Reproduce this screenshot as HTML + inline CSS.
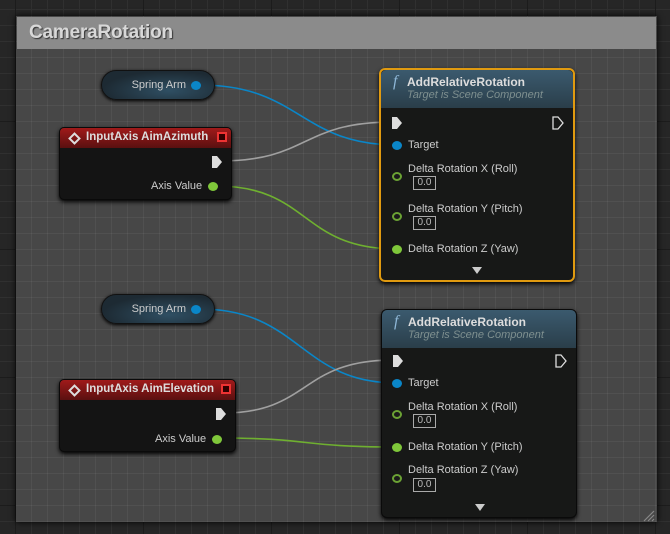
<!DOCTYPE html>
<html><head><style>
*{margin:0;padding:0;box-sizing:border-box}
body{width:670px;height:534px;overflow:hidden;background:#262626;font-family:"Liberation Sans",sans-serif;position:relative;
background-image:linear-gradient(#1c1c1c 1px,transparent 1px),linear-gradient(90deg,#1c1c1c 1px,transparent 1px),linear-gradient(#303030 1px,transparent 1px),linear-gradient(90deg,#303030 1px,transparent 1px);
background-size:128px 128px,128px 128px,16px 16px,16px 16px;background-position:-113px -7px,-113px -7px,-1px -7px,-1px -7px}
.abs{position:absolute}
.comment{left:16px;top:16px;width:641px;height:506px;background:#474747;box-shadow:0 0 6px #000;
background-image:linear-gradient(rgba(255,255,255,.05) 1px,transparent 1px),linear-gradient(90deg,rgba(255,255,255,.05) 1px,transparent 1px);background-size:16px 16px;background-position:-1px 9px}
.title{left:17px;top:17px;width:639px;height:32px;background:#8b8b8b;color:#d8d8d8;font-weight:bold;font-size:19px;padding:5px 12px;text-shadow:1px 1px 1px #333;letter-spacing:-0.2px}
.pill{height:30px;width:114px;border-radius:15px;background:radial-gradient(ellipse at 60% 70%,#2f4f63,#1d2a33 70%);border:1px solid #111;box-shadow:0 1px 3px #000;color:#ccc;font-size:11px;text-align:right;padding:8px 28px 0 0}
.dot{position:absolute;width:10px;height:9px;border-radius:50%}
.blue{background:#0a86c8}
.green{background:#7fc73a}
.ring{border:2px solid #6ba234;background:#1a1a1a}
.ev{background:#141414;border-radius:5px;border:1px solid #0a0a0a;box-shadow:0 2px 4px #000}
.evh{height:20px;background:linear-gradient(#a01a1a,#5a1010);border-radius:4px 4px 0 0;color:#ddd;font-weight:bold;font-size:11.5px;padding:3px 0 0 26px}
.fn{background:#171817;border-radius:6px;box-shadow:0 2px 4px #000}
.fnh{height:38px;background:linear-gradient(#3b5a6e,#2a3e4a);border-radius:5px 5px 0 0;color:#ddd;font-weight:bold;font-size:12px;padding:5px 0 0 26px}
.fnh i{display:block;font-weight:normal;font-size:11px;color:#7e8f8f}
.f{position:absolute;left:12px;top:3px;font-family:"Liberation Serif",serif;font-style:italic;color:#8fb8d8;font-size:16px;font-weight:normal}
.lbl{position:absolute;color:#ccc;font-size:11px;white-space:nowrap}
.box{position:absolute;width:23px;height:14px;border:1px solid #aaa;color:#bbb;font-size:10px;text-align:center;line-height:12px}
</style></head><body>
<div class="abs comment"></div>
<div class="abs title">CameraRotation</div>
<svg class="abs" style="left:640px;top:508px" width="16" height="14"><path d="M4 13L14 3M8 13L14 7M12 13L14 11" stroke="#888" stroke-width="1.2"/></svg>

<svg class="abs" style="left:0;top:0" width="670" height="534" fill="none" stroke-width="1.6">
<path d="M200 85 C300 85,300 145,397 145" stroke="#0a86c8"/>
<path d="M219 161 C310 161,300 122,393 122" stroke="#a0a0a0"/>
<path d="M216 186 C310 186,300 249,397 249" stroke="#6fb030"/>
<path d="M200 309 C300 309,300 383,397 383" stroke="#0a86c8"/>
<path d="M223 413 C310 413,300 360,393 360" stroke="#a0a0a0"/>
<path d="M220 438 C310 438,300 447,397 447" stroke="#6fb030"/>
</svg>

<div class="abs pill" style="left:101px;top:70px">Spring Arm</div>
<div class="dot blue" style="left:191px;top:81px"></div>
<div class="abs pill" style="left:101px;top:294px">Spring Arm</div>
<div class="dot blue" style="left:191px;top:305px"></div>

<div class="abs ev" style="left:59px;top:127px;width:173px;height:73px">
<div class="evh">InputAxis AimAzimuth</div>
<div class="abs" style="left:10px;top:6px;width:9px;height:9px;border:2px solid #ddd;transform:rotate(45deg)"></div>
<div class="abs" style="left:157px;top:4px;width:10px;height:10px;border:2px solid #e33;background:#300"></div>
<svg class="abs" style="left:151px;top:27px" width="12" height="14"><path d="M1 1H6L11 7L6 13H1Z" fill="#ddd"/></svg>
<div class="lbl" style="left:91px;top:52px">Axis Value</div>
<div class="dot green" style="left:148px;top:54px"></div>
</div>

<div class="abs ev" style="left:59px;top:379px;width:177px;height:73px">
<div class="evh">InputAxis AimElevation</div>
<div class="abs" style="left:10px;top:6px;width:9px;height:9px;border:2px solid #ddd;transform:rotate(45deg)"></div>
<div class="abs" style="left:161px;top:4px;width:10px;height:10px;border:2px solid #e33;background:#300"></div>
<svg class="abs" style="left:155px;top:27px" width="12" height="14"><path d="M1 1H6L11 7L6 13H1Z" fill="#ddd"/></svg>
<div class="lbl" style="left:95px;top:53px">Axis Value</div>
<div class="dot green" style="left:152px;top:55px"></div>
</div>

<div class="abs fn" style="left:379px;top:68px;width:196px;height:214px;border:2px solid #e09a10">
<div class="fnh"><span class="f">f</span>AddRelativeRotation<i>Target is Scene Component</i></div>
<svg class="abs" style="left:10px;top:46px" width="12" height="14"><path d="M1 1H6L11 7L6 13H1Z" fill="#ddd"/></svg>
<svg class="abs" style="left:171px;top:46px" width="12" height="14"><path d="M1 1H6L11 7L6 13H1Z" fill="none" stroke="#ddd" stroke-width="1.3"/></svg>
<div class="dot blue" style="left:11px;top:71px"></div><div class="lbl" style="left:27px;top:69px">Target</div>
<div class="dot ring" style="left:11px;top:102px"></div><div class="lbl" style="left:27px;top:93px">Delta Rotation X (Roll)</div><div class="box" style="left:32px;top:106px">0.0</div>
<div class="dot ring" style="left:11px;top:142px"></div><div class="lbl" style="left:27px;top:133px">Delta Rotation Y (Pitch)</div><div class="box" style="left:32px;top:146px">0.0</div>
<div class="dot green" style="left:11px;top:175px"></div><div class="lbl" style="left:27px;top:173px">Delta Rotation Z (Yaw)</div>
<svg class="abs" style="left:91px;top:197px" width="10" height="8"><path d="M0 0H10L5 7Z" fill="#ccc"/></svg>
</div>

<div class="abs fn" style="left:381px;top:309px;width:196px;height:209px;border:1px solid #0a0a0a">
<div class="fnh"><span class="f">f</span>AddRelativeRotation<i>Target is Scene Component</i></div>
<svg class="abs" style="left:10px;top:44px" width="12" height="14"><path d="M1 1H6L11 7L6 13H1Z" fill="#ddd"/></svg>
<svg class="abs" style="left:173px;top:44px" width="12" height="14"><path d="M1 1H6L11 7L6 13H1Z" fill="none" stroke="#ddd" stroke-width="1.3"/></svg>
<div class="dot blue" style="left:10px;top:69px"></div><div class="lbl" style="left:26px;top:67px">Target</div>
<div class="dot ring" style="left:10px;top:100px"></div><div class="lbl" style="left:26px;top:91px">Delta Rotation X (Roll)</div><div class="box" style="left:31px;top:104px">0.0</div>
<div class="dot green" style="left:10px;top:133px"></div><div class="lbl" style="left:26px;top:131px">Delta Rotation Y (Pitch)</div>
<div class="dot ring" style="left:10px;top:164px"></div><div class="lbl" style="left:26px;top:154px">Delta Rotation Z (Yaw)</div><div class="box" style="left:31px;top:168px">0.0</div>
<svg class="abs" style="left:93px;top:194px" width="10" height="8"><path d="M0 0H10L5 7Z" fill="#ccc"/></svg>
</div>
</body></html>
